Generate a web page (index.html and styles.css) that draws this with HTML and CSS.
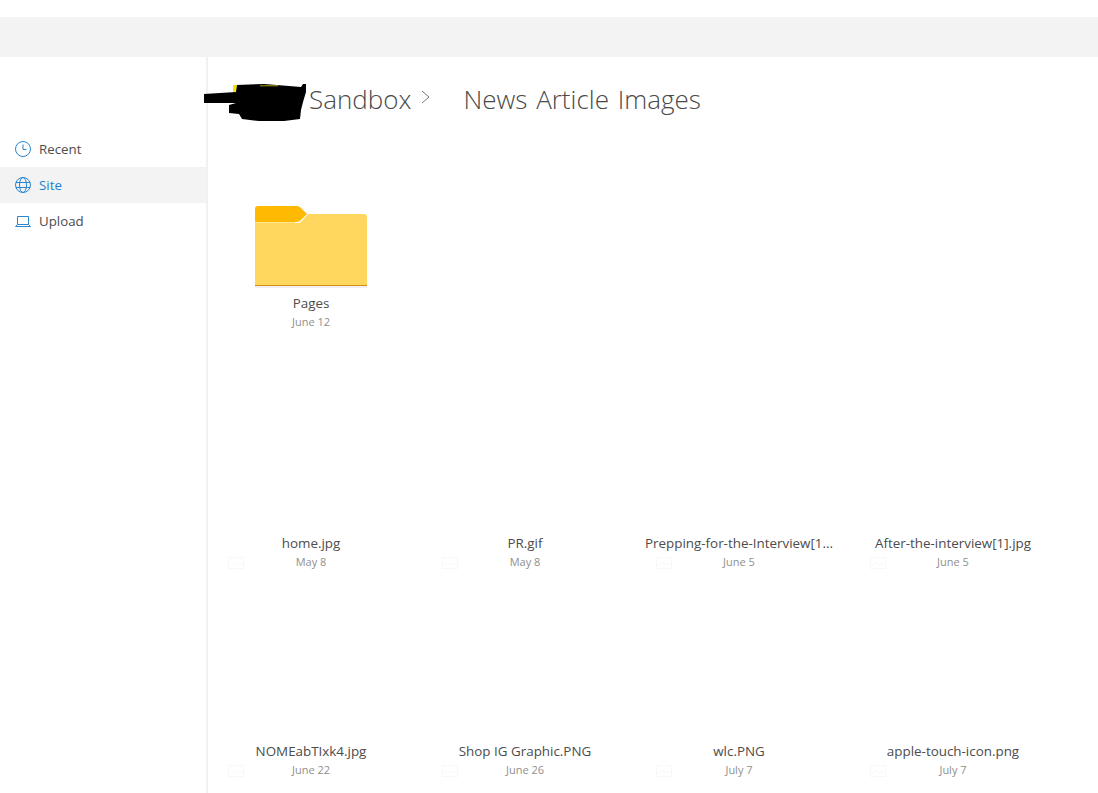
FILE: index.html
```html
<!DOCTYPE html>
<html lang="en">
<head>
<meta charset="utf-8">
<title>News Article Images</title>
<link rel="stylesheet" href="styles.css">
</head>
<body>
<div class="topbar"></div>
<div class="layout">
  <nav class="sidebar">
    <a class="nav-item">
      <svg class="nav-icon" viewBox="0 0 16 16"><circle cx="8" cy="8" r="7.5"/><path d="M8 3.5V8.5H11.5"/></svg>
      <span>Recent</span>
    </a>
    <a class="nav-item active">
      <svg class="nav-icon" viewBox="0 0 16 16"><circle cx="8" cy="8" r="7.5"/><ellipse cx="8" cy="8" rx="3.5" ry="7.5"/><path d="M1 5.5H15M1 10.5H15"/></svg>
      <span>Site</span>
    </a>
    <a class="nav-item">
      <svg class="nav-icon" viewBox="0 0 16 16"><path d="M2.5 11.5V3.5H13.5V11.5M0.5 13.5H15.5L13.5 11.5H2.5L0.5 13.5Z"/></svg>
      <span>Upload</span>
    </a>
  </nav>
  <main class="content">
    <header class="breadcrumb">
      <span class="crumb">Sandbox</span>
      <svg class="chevron" viewBox="0 0 9 14"><path d="M1 1L8 7L1 13"/></svg>
      <span class="crumb">News Article Images</span>
      <svg class="scribble" viewBox="0 0 104 40"><path class="scribble-tip" d="M29 1H34V9H29Z"/><path d="M33 1L60 0L85 2L97 3L99 0L102 0L102 8L99 18L97 26L96 35L80 37L55 37L38 35L35 30L25 29L25 21L32 19L0 19L0 10L32 8Z"/><path class="scribble-tip" d="M56 1.5H74V2.2H56Z"/></svg>
    </header>
    <section class="folder-row">
      <div class="tile">
        <svg class="folder" viewBox="0 0 112 82">
          <path class="folder-seam" d="M0 14H40V18H0Z"/>
          <path class="folder-tab" d="M0 3Q0 0 3 0H42Q44 0 46 2L52 8L46 14Q44 16 42 16H0Z"/>
          <path class="folder-front" d="M0 17H43Q45 17 47 15L53 8H109Q112 8 112 11V80H0Z"/>
          <rect class="folder-edge" x="0" y="79" width="112" height="1"/>
          <rect class="folder-shadow" x="0" y="80" width="112" height="2"/>
        </svg>
        <div class="name">Pages</div>
        <div class="date">June 12</div>
      </div>
    </section>
    <section class="file-grid">
      <div class="file"><div class="name">home.jpg</div><div class="date">May 8</div><svg class="thumb" viewBox="0 0 16 12"><rect x="0.5" y="0.5" width="15" height="11"/><path d="M1 9L5 5L9 8L12 6L15 8"/></svg></div>
      <div class="file"><div class="name">PR.gif</div><div class="date">May 8</div><svg class="thumb" viewBox="0 0 16 12"><rect x="0.5" y="0.5" width="15" height="11"/><path d="M1 9L5 5L9 8L12 6L15 8"/></svg></div>
      <div class="file"><div class="name">Prepping-for-the-Interview[1...</div><div class="date">June 5</div><svg class="thumb" viewBox="0 0 16 12"><rect x="0.5" y="0.5" width="15" height="11"/><path d="M1 9L5 5L9 8L12 6L15 8"/></svg></div>
      <div class="file"><div class="name">After-the-interview[1].jpg</div><div class="date">June 5</div><svg class="thumb" viewBox="0 0 16 12"><rect x="0.5" y="0.5" width="15" height="11"/><path d="M1 9L5 5L9 8L12 6L15 8"/></svg></div>
      <div class="file"><div class="name">NOMEabTIxk4.jpg</div><div class="date">June 22</div><svg class="thumb" viewBox="0 0 16 12"><rect x="0.5" y="0.5" width="15" height="11"/><path d="M1 9L5 5L9 8L12 6L15 8"/></svg></div>
      <div class="file"><div class="name">Shop IG Graphic.PNG</div><div class="date">June 26</div><svg class="thumb" viewBox="0 0 16 12"><rect x="0.5" y="0.5" width="15" height="11"/><path d="M1 9L5 5L9 8L12 6L15 8"/></svg></div>
      <div class="file"><div class="name">wlc.PNG</div><div class="date">July 7</div><svg class="thumb" viewBox="0 0 16 12"><rect x="0.5" y="0.5" width="15" height="11"/><path d="M1 9L5 5L9 8L12 6L15 8"/></svg></div>
      <div class="file"><div class="name">apple-touch-icon.png</div><div class="date">July 7</div><svg class="thumb" viewBox="0 0 16 12"><rect x="0.5" y="0.5" width="15" height="11"/><path d="M1 9L5 5L9 8L12 6L15 8"/></svg></div>
    </section>
  </main>
</div>
</body>
</html>
```
FILE: styles.css
```css
* { box-sizing: border-box; }
html, body { margin: 0; height: 793px; overflow: hidden; background: #fff; }
body { padding-top: 17px; font-family: "Open Sans", "Noto Sans", sans-serif; color: #444; }
.topbar { height: 40px; background: #f3f3f3; }
.layout { display: flex; height: 736px; }
.sidebar { width: 208px; flex: none; padding-top: 74px; border-right: 2px solid #f1f1f1; }
.nav-item { display: flex; align-items: center; gap: 8px; height: 36px; padding-left: 15px; font-size: 13.3px; color: #4c4c4c; }
.nav-item.active { background: #f3f3f3; color: #1682d4; }
.nav-icon { width: 16px; height: 16px; fill: none; stroke: #2a86cf; stroke-width: 1; flex: none; }
.content { flex: 1; min-width: 0; }
.breadcrumb { position: relative; display: flex; align-items: center; height: 84px; padding-left: 101px; font-size: 26px; font-weight: 300; word-spacing: 2px; color: #4a4a4a; }
.chevron { width: 9px; height: 14px; margin: 0 33px 4px 10px; fill: none; stroke: #777; stroke-width: 1; }
.scribble { position: absolute; left: -4px; top: 27px; width: 104px; height: 40px; fill: #000; }
.scribble-tip { fill: #f2e600; }
.folder-row { height: 186px; padding: 65px 0 0; }
.tile { width: 206px; text-align: center; }
.folder { display: block; width: 112px; height: 82px; margin: 0 auto 6px 47px; }
.tile .date { margin-top: 1px; }
.folder-seam { fill: #ffe48f; }
.folder-tab { fill: #ffb900; }
.folder-front { fill: #ffd75e; }
.folder-edge { fill: #d98a14; }
.folder-shadow { fill: #f1f1f1; }
.name { font-size: 13.4px; line-height: 18px; color: #4c4c4c; white-space: nowrap; }
.date { font-size: 11px; line-height: 18px; margin-top: 1px; color: #8f8f8f; }
.file-grid { display: grid; grid-template-columns: repeat(4, 214px); grid-template-rows: 208px 51px; padding-top: 207px; }
.file { position: relative; width: 206px; text-align: center; }
.thumb { position: absolute; left: 20px; top: 23px; width: 16px; height: 12px; fill: none; stroke: #f8f8f8; stroke-width: 1; }
```
